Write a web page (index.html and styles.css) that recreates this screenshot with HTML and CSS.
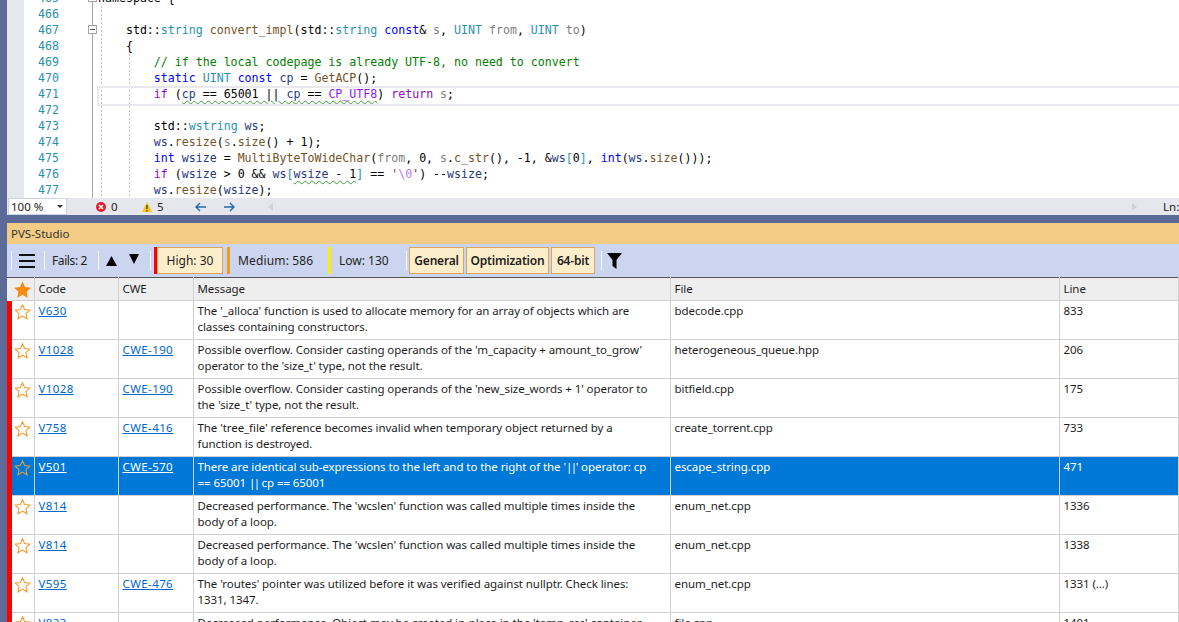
FILE: index.html
```html
<!DOCTYPE html>
<html lang="en">
<head>
    <meta charset="UTF-8">
    <title>PVS-Studio</title>
    <link rel="stylesheet" href="styles.css">
</head>
<body>
    <svg class="defs" width="0" height="0"><symbol id="star" viewBox="0 0 24 24"><path d="M12 2.500l3 6.800 7.400.800-5.600 4.900 1.600 7.300L12 18.500l-6.400 3.800 1.600-7.300-5.600-4.900 7.400-.800z"/></symbol></svg>

    <div class="editor">
        <div class="code-lines">
            <div class="line"><span class="num">465</span><span class="fold"><i class="fold-box"></i></span><span class="code">namespace {</span></div>
            <div class="line"><span class="num">466</span><span class="fold"></span><span class="code guide"></span></div>
            <div class="line"><span class="num">467</span><span class="fold"><i class="fold-box"></i></span><span class="code guide">    std::<b class="ty">string</b> <b class="fn">convert_impl</b>(std::<b class="ty">string</b> <b class="kw">const</b>&amp; <b class="pa">s</b>, <b class="ty">UINT</b> <b class="pa">from</b>, <b class="ty">UINT</b> <b class="pa">to</b>)</span></div>
            <div class="line"><span class="num">468</span><span class="fold"></span><span class="code guide">    {</span></div>
            <div class="line"><span class="num">469</span><span class="fold"></span><span class="code guide inner">        <b class="co">// if the local codepage is already UTF-8, no need to convert</b></span></div>
            <div class="line"><span class="num">470</span><span class="fold"></span><span class="code guide inner">        <b class="kw">static</b> <b class="ty">UINT</b> <b class="kw">const</b> <b class="va">cp</b> = <b class="fn">GetACP</b>();</span></div>
            <div class="line current"><span class="num">471</span><span class="fold"></span><span class="code guide inner">        <b class="ct">if</b> (<u class="squiggle"><b class="va">cp</b> == 65001 || <b class="va">cp</b> == <b class="ma">CP_UTF8</b></u>) <b class="ct">return</b> <b class="pa">s</b>;</span></div>
            <div class="line"><span class="num">472</span><span class="fold"></span><span class="code guide inner"></span></div>
            <div class="line"><span class="num">473</span><span class="fold"></span><span class="code guide inner">        std::<b class="ty">wstring</b> <b class="va">ws</b>;</span></div>
            <div class="line"><span class="num">474</span><span class="fold"></span><span class="code guide inner">        <b class="va">ws</b>.<b class="fn">resize</b>(<b class="pa">s</b>.<b class="fn">size</b>() + 1);</span></div>
            <div class="line"><span class="num">475</span><span class="fold"></span><span class="code guide inner">        <b class="kw">int</b> <b class="va">wsize</b> = <b class="fn">MultiByteToWideChar</b>(<b class="pa">from</b>, 0, <b class="pa">s</b>.<b class="fn">c_str</b>(), -1, &amp;<b class="va">ws</b><b class="ty">[</b>0<b class="ty">]</b>, <b class="kw">int</b>(<b class="va">ws</b>.<b class="fn">size</b>()));</span></div>
            <div class="line"><span class="num">476</span><span class="fold"></span><span class="code guide inner">        <b class="ct">if</b> (<b class="va">wsize</b> &gt; 0 &amp;&amp; <b class="va">ws</b><b class="ty">[</b><u class="squiggle"><b class="va">wsize</b> - 1</u><b class="ty">]</b> == <b class="st">'<b class="es">\0</b>'</b>) --<b class="va">wsize</b>;</span></div>
            <div class="line"><span class="num">477</span><span class="fold"></span><span class="code guide inner">        <b class="va">ws</b>.<b class="fn">resize</b>(<b class="va">wsize</b>);</span></div>
        </div>
    </div>

    <div class="status-bar">
        <div class="zoom-box"><span>100 %</span><i class="zoom-arrow"></i></div>
        <svg class="status-icon first" width="10" height="10" viewBox="0 0 10 10"><circle cx="5" cy="5" r="5" fill="#e51c2c"/><path d="M3 3l4 4M7 3l-4 4" stroke="#fff" stroke-width="1.500"/></svg>
        <span class="status-count">0</span>
        <svg class="status-icon" width="10" height="10" viewBox="0 0 10 10"><path d="M5 0l5 10H0z" fill="#f5c518"/><path d="M5 3v4M5 8v1.500" stroke="#222" stroke-width="1.100"/></svg>
        <span class="status-count">5</span>
        <svg class="nav-arrow first" width="11" height="10" viewBox="0 0 11 10"><path d="M11 5H1M5 1L1 5l4 4" fill="none" stroke="#1c6cb0" stroke-width="1.400"/></svg>
        <svg class="nav-arrow" width="11" height="10" viewBox="0 0 11 10"><path d="M0 5h10M6 1l4 4-4 4" fill="none" stroke="#1c6cb0" stroke-width="1.400"/></svg>
        <i class="scroll-left"></i>
        <i class="scroll-right"></i>
        <span class="status-ln">Ln:</span>
    </div>

    <div class="splitter"></div>
    <div class="panel-title">PVS-Studio</div>

    <div class="toolbar">
        <i class="sep"></i>
        <div class="menu-icon"><i></i><i></i><i></i></div>
        <i class="sep"></i>
        <span class="fails">Fails: 2</span>
        <i class="sep"></i>
        <svg class="tri up" width="11" height="10" viewBox="0 0 11 10"><path d="M5.500 0L11 10H0z"/></svg>
        <svg class="tri down" width="10" height="10" viewBox="0 0 10 10"><path d="M0 0h10L5 10z"/></svg>
        <i class="sep"></i>
        <i class="level red"></i><span class="toggle high">High: 30</span>
        <i class="level orange"></i><span class="plain medium">Medium: 586</span>
        <i class="level yellow"></i><span class="plain low">Low: 130</span>
        <i class="sep"></i>
        <span class="toggle strong general">General</span>
        <span class="toggle strong optimization">Optimization</span>
        <span class="toggle strong bit64">64-bit</span>
        <i class="sep"></i>
        <svg class="funnel" width="15" height="16" viewBox="0 0 15 16"><path d="M0 0h15L9.500 7v9L5.500 13V7z"/></svg>
    </div>

    <table class="results">
        <colgroup>
            <col class="c-sev"><col class="c-star"><col class="c-code"><col class="c-cwe"><col class="c-msg"><col class="c-file"><col class="c-line">
        </colgroup>
        <thead>
            <tr>
                <th class="sev"></th>
                <th class="star full"><svg width="17" height="17"><use href="#star"/></svg></th>
                <th>Code</th><th>CWE</th><th>Message</th><th>File</th><th>Line</th>
            </tr>
        </thead>
        <tbody>
            <tr>
                <td class="sev"></td><td class="star"><svg width="17" height="17"><use href="#star"/></svg></td>
                <td><a>V630</a></td><td></td>
                <td>The '_alloca' function is used to allocate memory for an array of objects which are<br>classes containing constructors.</td>
                <td>bdecode.cpp</td><td>833</td>
            </tr>
            <tr>
                <td class="sev"></td><td class="star"><svg width="17" height="17"><use href="#star"/></svg></td>
                <td><a>V1028</a></td><td><a>CWE-190</a></td>
                <td>Possible overflow. Consider casting operands of the 'm_capacity + amount_to_grow'<br>operator to the 'size_t' type, not the result.</td>
                <td>heterogeneous_queue.hpp</td><td>206</td>
            </tr>
            <tr>
                <td class="sev"></td><td class="star"><svg width="17" height="17"><use href="#star"/></svg></td>
                <td><a>V1028</a></td><td><a>CWE-190</a></td>
                <td>Possible overflow. Consider casting operands of the 'new_size_words + 1' operator to<br>the 'size_t' type, not the result.</td>
                <td>bitfield.cpp</td><td>175</td>
            </tr>
            <tr>
                <td class="sev"></td><td class="star"><svg width="17" height="17"><use href="#star"/></svg></td>
                <td><a>V758</a></td><td><a>CWE-416</a></td>
                <td>The 'tree_file' reference becomes invalid when temporary object returned by a<br>function is destroyed.</td>
                <td>create_torrent.cpp</td><td>733</td>
            </tr>
            <tr class="selected">
                <td class="sev"></td><td class="star"><svg width="17" height="17"><use href="#star"/></svg></td>
                <td><a>V501</a></td><td><a>CWE-570</a></td>
                <td>There are identical sub-expressions to the left and to the right of the '<span class="pipes">||</span>' operator: cp<br>== 65001 <span class="pipes">||</span> cp == 65001</td>
                <td>escape_string.cpp</td><td>471</td>
            </tr>
            <tr>
                <td class="sev"></td><td class="star"><svg width="17" height="17"><use href="#star"/></svg></td>
                <td><a>V814</a></td><td></td>
                <td>Decreased performance. The 'wcslen' function was called multiple times inside the<br>body of a loop.</td>
                <td>enum_net.cpp</td><td>1336</td>
            </tr>
            <tr>
                <td class="sev"></td><td class="star"><svg width="17" height="17"><use href="#star"/></svg></td>
                <td><a>V814</a></td><td></td>
                <td>Decreased performance. The 'wcslen' function was called multiple times inside the<br>body of a loop.</td>
                <td>enum_net.cpp</td><td>1338</td>
            </tr>
            <tr>
                <td class="sev"></td><td class="star"><svg width="17" height="17"><use href="#star"/></svg></td>
                <td><a>V595</a></td><td><a>CWE-476</a></td>
                <td>The 'routes' pointer was utilized before it was verified against nullptr. Check lines:<br>1331, 1347.</td>
                <td>enum_net.cpp</td><td>1331 (...)</td>
            </tr>
            <tr>
                <td class="sev"></td><td class="star"><svg width="17" height="17"><use href="#star"/></svg></td>
                <td><a>V823</a></td><td></td>
                <td>Decreased performance. Object may be created in-place in the 'temp_res' container.<br>&nbsp;</td>
                <td>file.cpp</td><td>1401</td>
            </tr>
        </tbody>
    </table>
</body>
</html>
```

FILE: styles.css
```css
* {
    margin: 0;
    padding: 0;
    box-sizing: border-box;
}

html, body {
    height: 622px;
    overflow: hidden;
}

body {
    background-color: #5c6a98;
    padding-left: 7px;
    font-family: "Noto Sans", "Open Sans", sans-serif;
    font-size: 11.5px;
    color: #1e1e1e;
}

i {
    display: block;
}

.defs {
    display: block;
    height: 0;
}

/* code editor */
.editor {
    height: 198px;
    background-color: #fff;
    overflow: hidden;
}

.code-lines {
    margin-top: -10px;
    font-family: "DejaVu Sans Mono", "Liberation Mono", monospace;
    font-size: 11.6px;
    color: #000;
}

.code-lines b {
    font-weight: normal;
}

.line {
    height: 16px;
    line-height: 16px;
    display: flex;
    white-space: pre;
}

.num {
    width: 52px;
    padding-left: 31px;
    background: linear-gradient(to right, #e6e7ed 17px, #fff 17px);
    color: #2b91af;
}

.fold {
    width: 39px;
    background: linear-gradient(#a5a5a5, #a5a5a5) no-repeat 33px 0 / 1px 100%;
    position: relative;
}

.fold-box {
    position: absolute;
    left: 29px;
    top: 3px;
    width: 9px;
    height: 9px;
    border: 1px solid #a5a5a5;
    background: linear-gradient(#555, #555) no-repeat center / 5px 1px #fff;
}

.code {
    flex: 1;
}

.guide {
    background: repeating-linear-gradient(#c4c4c4 0 2px, transparent 2px 4px) no-repeat 3px 0 / 1px 100%;
}

.inner {
    background:
        repeating-linear-gradient(#c4c4c4 0 2px, transparent 2px 4px) no-repeat 3px 0 / 1px 100%,
        repeating-linear-gradient(#c4c4c4 0 2px, transparent 2px 4px) no-repeat 31px 0 / 1px 100%;
}

.current {
    position: relative;
}

.current::after {
    content: "";
    position: absolute;
    left: 90px;
    right: 0;
    top: 0;
    height: 16px;
    border: 2px solid #e8e8ee;
    border-right: 0;
}

.kw { color: #0000ff; }
.ty { color: #2b91af; }
.fn { color: #74531f; }
.pa { color: #808080; }
.va { color: #1f377f; }
.ma { color: #8a1bff; }
.ct { color: #8f08c4; }
.co { color: #008000; }
.st { color: #a31515; }
.es { color: #b776fb; }

.squiggle {
    text-decoration: underline wavy #3fa03f 1px;
    text-underline-offset: 2px;
}

/* bar under the editor */
.status-bar {
    height: 17px;
    background-color: #e6e7ed;
    display: flex;
    align-items: center;
    position: relative;
}

.zoom-box {
    width: 59px;
    height: 17px;
    margin-left: 1px;
    padding-left: 2px;
    background-color: #fff;
    border: 1px solid #ccd3e6;
    display: flex;
    align-items: center;
    justify-content: space-between;
}

.zoom-arrow {
    width: 0;
    height: 0;
    margin-right: 3px;
    border: 3px solid transparent;
    border-top: 3px solid #333;
    border-bottom: 0;
}

.status-icon {
    margin-left: 23px;
}

.status-icon.first {
    margin-left: 29px;
}

.status-count {
    margin-left: 5px;
    width: 8px;
}

.nav-arrow {
    margin-left: 18px;
}

.nav-arrow.first {
    margin-left: 30px;
}

.scroll-left,
.scroll-right {
    width: 0;
    height: 0;
    border: 4px solid transparent;
}

.scroll-left {
    margin-left: 33px;
    border-left: 0;
    border-right: 5px solid #cfd0d8;
}

.scroll-right {
    margin-left: auto;
    border-right: 0;
    border-left: 5px solid #cfd0d8;
}

.status-ln {
    margin-left: 26px;
    width: 16px;
    white-space: nowrap;
}

.splitter {
    height: 8px;
}

.panel-title {
    height: 21px;
    line-height: 21px;
    padding-left: 4px;
    background-color: #f3cb84;
    color: #333;
}

/* toolbar */
.toolbar {
    height: 33px;
    padding: 3px 0 3px 4px;
    background-color: #cbd5ef;
    display: flex;
    align-items: center;
    font-size: 12px;
}

.sep {
    width: 1px;
    height: 19px;
    background-color: #f4f6fc;
}

.menu-icon {
    width: 16px;
    margin: 0 9px 0 7px;
    display: flex;
    flex-direction: column;
    gap: 4px;
}

.menu-icon i {
    height: 2px;
    background-color: #111;
}

.fails {
    width: 53px;
    padding-left: 7px;
    letter-spacing: -0.4px;
}

.tri.up {
    margin-left: 7px;
}

.tri.down {
    margin: -3px 11px 0 12px;
}

.level {
    width: 3px;
    height: 27px;
}

.sep + .level {
    margin-left: 3px;
}

.red { background-color: #ff0000; }
.orange { background-color: #f39c12; margin-left: 4px; }
.yellow { background-color: #ffee00; }

.toggle {
    height: 27px;
    line-height: 25px;
    border: 1px solid #dba65a;
    background-color: #fdeecb;
    white-space: nowrap;
    text-align: center;
}

.high {
    width: 66px;
}

.plain {
    white-space: nowrap;
}

.medium {
    width: 98px;
    padding-left: 8px;
    letter-spacing: 0.15px;
}

.low {
    width: 75px;
    padding-left: 8px;
}

.strong {
    margin-left: 2px;
    font-weight: 600;
    letter-spacing: -0.2px;
}

.general { width: 55px; }
.optimization { width: 83px; }
.bit64 { width: 44px; }

.strong + .sep {
    margin-left: 6px;
}

.funnel {
    margin-left: 5px;
}

/* results table */
.results {
    width: 1172px;
    table-layout: fixed;
    border-collapse: collapse;
    background-color: #fff;
    border-top: 1px solid #555;
    letter-spacing: -0.07px;
}

.c-sev { width: 5px; }
.c-star { width: 22px; }
.c-code { width: 84px; }
.c-cwe { width: 75px; }
.c-msg { width: 477px; }
.c-file { width: 389px; }

.results th,
.results td {
    padding: 2px 4px 0;
    border: 1px solid #d0d0d0;
    border-top: 0;
    vertical-align: top;
    text-align: left;
    font-weight: normal;
    line-height: 16px;
    white-space: nowrap;
    overflow: hidden;
}

.results th {
    height: 23px;
    padding-top: 3px;
    background-color: #eeeeee;
}

.results td {
    height: 39px;
}

.results .sev {
    padding: 0;
    background-color: #ff0000;
    border: 0;
}

.results th.sev {
    background-color: #eeeeee;
}

.results .star {
    padding: 0 0 0 2px;
    border-left: 0;
}

.star svg {
    display: block;
    margin-top: 2px;
    fill: none;
    stroke: #f59a2c;
    stroke-width: 1.500;
}

.star.full svg {
    margin-top: 3px;
    fill: #f88a0c;
    stroke: #f88a0c;
}

.results a {
    color: #0066cc;
    text-decoration: underline;
    letter-spacing: 0.4px;
}

.pipes {
    letter-spacing: -1.5px;
}

.selected td {
    background-color: #0078d7;
    color: #fff;
}

.selected a {
    color: #fff;
}

.selected .star svg {
    stroke: #e89a3c;
}
```
